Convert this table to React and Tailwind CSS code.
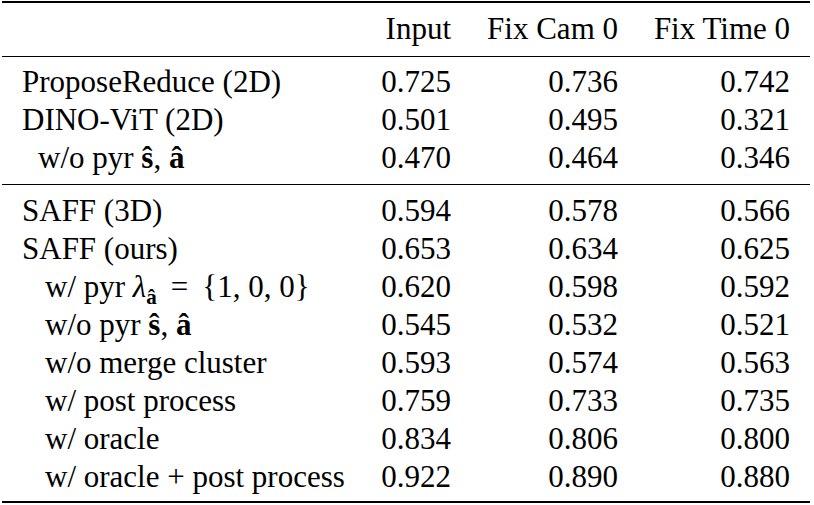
import React from 'react';

// columns: label | Input | Fix Cam 0 | Fix Time 0
const groupA = [
  { label: 'ProposeReduce (2D)', vals: ['0.725', '0.736', '0.742'] },
  { label: 'DINO-ViT (2D)', vals: ['0.501', '0.495', '0.321'] },
  { label: 'hats', sub: 'a', vals: ['0.470', '0.464', '0.346'] },
];

const groupB = [
  { label: 'SAFF (3D)', vals: ['0.594', '0.578', '0.566'] },
  { label: 'SAFF (ours)', vals: ['0.653', '0.634', '0.625'] },
  { label: 'lambda', sub: 'b', vals: ['0.620', '0.598', '0.592'] },
  { label: 'hats', sub: 'b', vals: ['0.545', '0.532', '0.521'] },
  { label: 'w/o merge cluster', sub: 'b', vals: ['0.593', '0.574', '0.563'] },
  { label: 'w/ post process', sub: 'b', vals: ['0.759', '0.733', '0.735'] },
  { label: 'w/ oracle', sub: 'b', vals: ['0.834', '0.806', '0.800'] },
  { label: 'w/ oracle + post process', sub: 'b', vals: ['0.922', '0.890', '0.880'] },
];

function Label({ label }) {
  if (label === 'hats') {
    return (
      <>
        w/o pyr <span className="font-bold">ŝ</span>, <span className="font-bold">â</span>
      </>
    );
  }
  if (label === 'lambda') {
    return (
      <>
        w/ pyr <span className="italic">λ</span>
        <span className="inline-block text-[21px] leading-[20px] font-bold translate-y-[7px]">â</span>
        <span className="mx-[14px]">=</span>
        {'{1, 0, 0}'}
      </>
    );
  }
  return label;
}

function Row({ row }) {
  const pad = row.sub === 'a' ? 'pl-[36px]' : row.sub === 'b' ? 'pl-[43px]' : 'pl-[20px]';
  return (
    <div className="grid grid-cols-[358px_111px_167px_172px] h-[38px] leading-[38px]">
      <div className={pad + ' whitespace-nowrap'}>
        <Label label={row.label} />
      </div>
      {row.vals.map((v, i) => (
        <div key={i} className="pr-[20px] text-right">
          {v}
        </div>
      ))}
    </div>
  );
}

export default function App() {
  return (
    <div className="w-[814px] h-[505px] bg-white text-black overflow-hidden pt-[1px] pl-[2px] font-['Liberation_Serif'] text-[31px]">
      <div className="w-[808px]">
        <div className="h-[2px] bg-black" />
        <div className="pt-[7px] pb-[8px]">
          <div className="grid grid-cols-[358px_111px_167px_172px] h-[38px] leading-[38px]">
            <div />
            <div className="pr-[20px] text-right">Input</div>
            <div className="pr-[20px] text-right">Fix Cam 0</div>
            <div className="pr-[20px] text-right">Fix Time 0</div>
          </div>
        </div>
        <div className="h-[1px] bg-black" />
        <div className="pt-[6px] pb-[7px]">
          {groupA.map((r, i) => (
            <Row key={i} row={r} />
          ))}
        </div>
        <div className="h-[1px] bg-black" />
        <div className="pt-[7px] pb-[5px]">
          {groupB.map((r, i) => (
            <Row key={i} row={r} />
          ))}
        </div>
        <div className="h-[2px] bg-black" />
      </div>
    </div>
  );
}
